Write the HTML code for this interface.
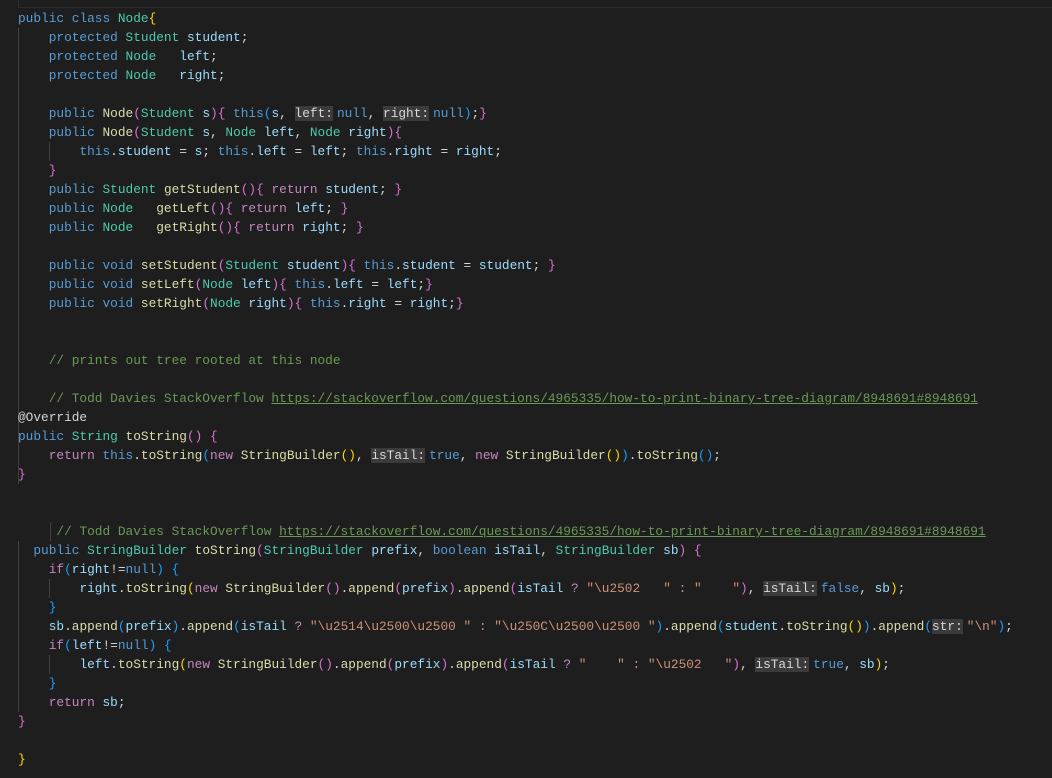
<!DOCTYPE html>
<html><head><meta charset="utf-8"><style>
html,body{margin:0;padding:0;background:#1e1e1e;width:1052px;height:778px;overflow:hidden;}
#code{position:absolute;left:18px;top:9px;font-family:"Liberation Mono",monospace;font-size:12.8px;line-height:19px;white-space:pre;color:#d4d4d4;}
.k{color:#569cd6}.t{color:#4ec9b0}.f{color:#dcdcaa}.v{color:#9cdcfe}.c{color:#6a9955}.s{color:#ce9178}.p{color:#c586c0}
.b1{color:#ffd700}.b2{color:#da70d6}.b3{color:#179fff}
.u{text-decoration:underline;}
.h{background:#3b3b3b;color:#d8d8d8;margin-right:4px;}
.g{position:absolute;width:1px;background:#404040;}
</style></head><body>
<div style="position:absolute;left:18px;top:0;width:1px;height:7px;background:#2d2d2d"></div>
<div style="position:absolute;left:18px;top:7px;width:1034px;height:1px;background:#2d2d2d"></div>
<div class="g" style="left:18px;top:28px;height:456px"></div>
<div class="g" style="left:49px;top:142px;height:19px"></div>
<div class="g" style="left:18px;top:541px;height:171px"></div>
<div class="g" style="left:50px;top:522px;height:19px"></div>
<div class="g" style="left:49px;top:579px;height:19px"></div>
<div class="g" style="left:49px;top:655px;height:19px"></div>
<div id="code"><span class="k">public</span> <span class="k">class</span> <span class="t">Node</span><span class="b1">{</span>
    <span class="k">protected</span> <span class="t">Student</span> <span class="v">student</span>;
    <span class="k">protected</span> <span class="t">Node</span>   <span class="v">left</span>;
    <span class="k">protected</span> <span class="t">Node</span>   <span class="v">right</span>;

    <span class="k">public</span> <span class="f">Node</span><span class="b2">(</span><span class="t">Student</span> <span class="v">s</span><span class="b2">){</span> <span class="k">this</span><span class="b3">(</span><span class="v">s</span>, <span class="h">left:</span><span class="k">null</span>, <span class="h">right:</span><span class="k">null</span><span class="b3">)</span>;<span class="b2">}</span>
    <span class="k">public</span> <span class="f">Node</span><span class="b2">(</span><span class="t">Student</span> <span class="v">s</span>, <span class="t">Node</span> <span class="v">left</span>, <span class="t">Node</span> <span class="v">right</span><span class="b2">){</span>
        <span class="k">this</span>.<span class="v">student</span> = <span class="v">s</span>; <span class="k">this</span>.<span class="v">left</span> = <span class="v">left</span>; <span class="k">this</span>.<span class="v">right</span> = <span class="v">right</span>;
    <span class="b2">}</span>
    <span class="k">public</span> <span class="t">Student</span> <span class="f">getStudent</span><span class="b2">(){</span> <span class="p">return</span> <span class="v">student</span>; <span class="b2">}</span>
    <span class="k">public</span> <span class="t">Node</span>   <span class="f">getLeft</span><span class="b2">(){</span> <span class="p">return</span> <span class="v">left</span>; <span class="b2">}</span>
    <span class="k">public</span> <span class="t">Node</span>   <span class="f">getRight</span><span class="b2">(){</span> <span class="p">return</span> <span class="v">right</span>; <span class="b2">}</span>

    <span class="k">public</span> <span class="k">void</span> <span class="f">setStudent</span><span class="b2">(</span><span class="t">Student</span> <span class="v">student</span><span class="b2">){</span> <span class="k">this</span>.<span class="v">student</span> = <span class="v">student</span>; <span class="b2">}</span>
    <span class="k">public</span> <span class="k">void</span> <span class="f">setLeft</span><span class="b2">(</span><span class="t">Node</span> <span class="v">left</span><span class="b2">){</span> <span class="k">this</span>.<span class="v">left</span> = <span class="v">left</span>;<span class="b2">}</span>
    <span class="k">public</span> <span class="k">void</span> <span class="f">setRight</span><span class="b2">(</span><span class="t">Node</span> <span class="v">right</span><span class="b2">){</span> <span class="k">this</span>.<span class="v">right</span> = <span class="v">right</span>;<span class="b2">}</span>


    <span class="c">// prints out tree rooted at this node</span>

    <span class="c">// Todd Davies StackOverflow <span class="u">https://stackoverflow.com/questions/4965335/how-to-print-binary-tree-diagram/8948691#8948691</span></span>
@Override
<span class="k">public</span> <span class="t">String</span> <span class="f">toString</span><span class="b2">()</span> <span class="b2">{</span>
    <span class="p">return</span> <span class="k">this</span>.<span class="f">toString</span><span class="b3">(</span><span class="p">new</span> <span class="f">StringBuilder</span><span class="b1">()</span>, <span class="h">isTail:</span><span class="k">true</span>, <span class="p">new</span> <span class="f">StringBuilder</span><span class="b1">()</span><span class="b3">)</span>.<span class="f">toString</span><span class="b3">()</span>;
<span class="b2">}</span>


     <span class="c">// Todd Davies StackOverflow <span class="u">https://stackoverflow.com/questions/4965335/how-to-print-binary-tree-diagram/8948691#8948691</span></span>
  <span class="k">public</span> <span class="t">StringBuilder</span> <span class="f">toString</span><span class="b2">(</span><span class="t">StringBuilder</span> <span class="v">prefix</span>, <span class="k">boolean</span> <span class="v">isTail</span>, <span class="t">StringBuilder</span> <span class="v">sb</span><span class="b2">)</span> <span class="b2">{</span>
    <span class="p">if</span><span class="b3">(</span><span class="v">right</span>!=<span class="k">null</span><span class="b3">)</span> <span class="b3">{</span>
        <span class="v">right</span>.<span class="f">toString</span><span class="b1">(</span><span class="p">new</span> <span class="f">StringBuilder</span><span class="b2">()</span>.<span class="f">append</span><span class="b2">(</span><span class="v">prefix</span><span class="b2">)</span>.<span class="f">append</span><span class="b2">(</span><span class="v">isTail</span> <span class="p">?</span> <span class="s">"\u2502   "</span> <span class="p">:</span> <span class="s">"    "</span><span class="b2">)</span>, <span class="h">isTail:</span><span class="k">false</span>, <span class="v">sb</span><span class="b1">)</span>;
    <span class="b3">}</span>
    <span class="v">sb</span>.<span class="f">append</span><span class="b3">(</span><span class="v">prefix</span><span class="b3">)</span>.<span class="f">append</span><span class="b3">(</span><span class="v">isTail</span> <span class="p">?</span> <span class="s">"\u2514\u2500\u2500 "</span> <span class="p">:</span> <span class="s">"\u250C\u2500\u2500 "</span><span class="b3">)</span>.<span class="f">append</span><span class="b3">(</span><span class="v">student</span>.<span class="f">toString</span><span class="b1">()</span><span class="b3">)</span>.<span class="f">append</span><span class="b3">(</span><span class="h">str:</span><span class="s">"\n"</span><span class="b3">)</span>;
    <span class="p">if</span><span class="b3">(</span><span class="v">left</span>!=<span class="k">null</span><span class="b3">)</span> <span class="b3">{</span>
        <span class="v">left</span>.<span class="f">toString</span><span class="b1">(</span><span class="p">new</span> <span class="f">StringBuilder</span><span class="b2">()</span>.<span class="f">append</span><span class="b2">(</span><span class="v">prefix</span><span class="b2">)</span>.<span class="f">append</span><span class="b2">(</span><span class="v">isTail</span> <span class="p">?</span> <span class="s">"    "</span> <span class="p">:</span> <span class="s">"\u2502   "</span><span class="b2">)</span>, <span class="h">isTail:</span><span class="k">true</span>, <span class="v">sb</span><span class="b1">)</span>;
    <span class="b3">}</span>
    <span class="p">return</span> <span class="v">sb</span>;
<span class="b2">}</span>

<span class="b1">}</span></div>
</body></html>
